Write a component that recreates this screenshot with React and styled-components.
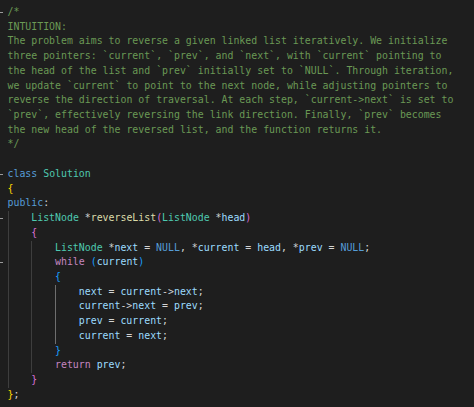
import styled, { createGlobalStyle } from 'styled-components';

const GlobalStyle = createGlobalStyle`
  html, body {
    margin: 0;
    padding: 0;
    background: #1e1e1e;
  }
`;

const palette = {
  cm: '#6a9955',
  kw: '#569cd6',
  ty: '#4ec9b0',
  fn: '#dcdcaa',
  va: '#9cdcfe',
  ct: '#c586c0',
  tx: '#d4d4d4',
  b1: '#ffd700',
  b2: '#da70d6',
  b3: '#179fff',
};

const Editor = styled.div`
  width: 474px;
  height: 407px;
  box-sizing: border-box;
  padding-top: 5px;
  background: #1e1e1e;
  font-family: 'DejaVu Sans Mono', 'Liberation Mono', monospace;
  font-size: 9.9px;
  overflow: hidden;
`;

const Line = styled.div`
  display: flex;
  height: 14.72px;
  line-height: 14.72px;
  white-space: pre;
`;

const Gutter = styled.span`
  flex: 0 0 7.5px;
  display: flex;
  align-items: center;
`;

const FoldMark = styled.span`
  width: 3px;
  height: 1.2px;
  background: #9a9a9a;
`;

const Indent = styled.span`
  flex: 0 0 4ch;
  box-sizing: border-box;
  border-left: 1px solid ${(p) => (p.$active ? '#6e6e6e' : '#3e3e3e')};
`;

const Token = styled.span`
  color: ${(p) => palette[p.$k]};
`;

const comment = (text) => ({ fold: false, indent: 0, tokens: [[text, 'cm']] });

const lines = [
  { ...comment('/*'), fold: true },
  comment('INTUITION:'),
  comment('The problem aims to reverse a given linked list iteratively. We initialize'),
  comment('three pointers: `current`, `prev`, and `next`, with `current` pointing to'),
  comment('the head of the list and `prev` initially set to `NULL`. Through iteration,'),
  comment('we update `current` to point to the next node, while adjusting pointers to'),
  comment('reverse the direction of traversal. At each step, `current->next` is set to'),
  comment('`prev`, effectively reversing the link direction. Finally, `prev` becomes'),
  comment('the new head of the reversed list, and the function returns it.'),
  comment('*/'),
  { indent: 0, tokens: [] },
  { fold: true, indent: 0, tokens: [['class', 'kw'], [' '], ['Solution', 'ty']] },
  { indent: 0, tokens: [['{', 'b1']] },
  { indent: 0, tokens: [['public', 'kw'], [':', 'tx']] },
  {
    fold: true,
    indent: 1,
    tokens: [
      ['ListNode', 'ty'], [' *'], ['reverseList', 'fn'], ['(', 'b2'],
      ['ListNode', 'ty'], [' *'], ['head', 'va'], [')', 'b2'],
    ],
  },
  { indent: 1, tokens: [['{', 'b2']] },
  {
    indent: 2,
    tokens: [
      ['ListNode', 'ty'], [' *'], ['next', 'va'], [' = '], ['NULL', 'kw'], [', *'],
      ['current', 'va'], [' = '], ['head', 'va'], [', *'], ['prev', 'va'], [' = '],
      ['NULL', 'kw'], [';'],
    ],
  },
  { fold: true, indent: 2, tokens: [['while', 'ct'], [' '], ['(', 'b3'], ['current', 'va'], [')', 'b3']] },
  { indent: 2, tokens: [['{', 'b3']] },
  { indent: 3, active: true, tokens: [['next', 'va'], [' = '], ['current', 'va'], ['->'], ['next', 'va'], [';']] },
  { indent: 3, active: true, tokens: [['current', 'va'], ['->'], ['next', 'va'], [' = '], ['prev', 'va'], [';']] },
  { indent: 3, active: true, tokens: [['prev', 'va'], [' = '], ['current', 'va'], [';']] },
  { indent: 3, active: true, tokens: [['current', 'va'], [' = '], ['next', 'va'], [';']] },
  { indent: 2, tokens: [['}', 'b3']] },
  { indent: 2, tokens: [['return', 'ct'], [' '], ['prev', 'va'], [';']] },
  { indent: 1, tokens: [['}', 'b2']] },
  { indent: 0, tokens: [['}', 'b1'], [';']] },
];

const CodeLine = ({ line }) => (
  <Line>
    <Gutter>{line.fold && <FoldMark />}</Gutter>
    {Array.from({ length: line.indent }, (_, i) => (
      <Indent key={i} $active={line.active && i === line.indent - 1} />
    ))}
    <span>
      {line.tokens.map(([text, kind], i) => (
        <Token key={i} $k={kind || 'tx'}>
          {text}
        </Token>
      ))}
    </span>
  </Line>
);

const App = () => {
  return (
    <>
      <GlobalStyle />
      <Editor>
        {lines.map((line, i) => (
          <CodeLine key={i} line={line} />
        ))}
      </Editor>
    </>
  );
};

export default App;
